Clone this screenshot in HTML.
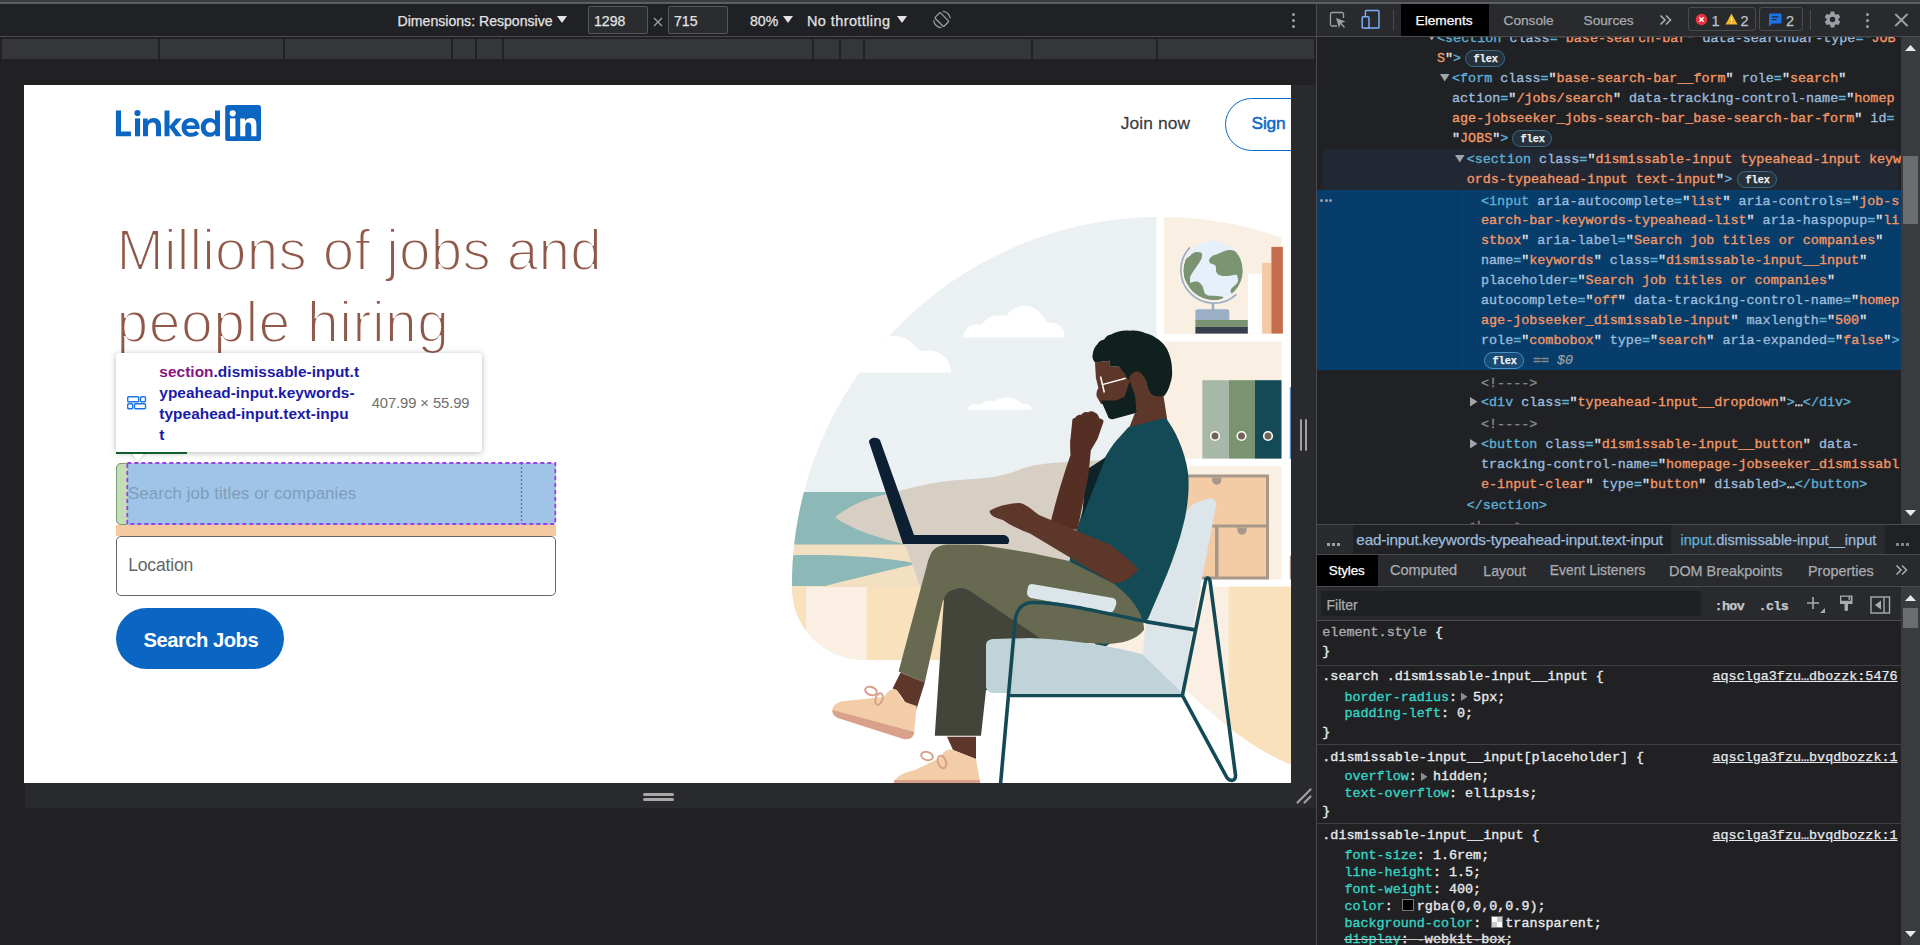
<!DOCTYPE html>
<html><head><meta charset="utf-8">
<style>
*{margin:0;padding:0;box-sizing:border-box}
html,body{width:1920px;height:945px;overflow:hidden;background:#212124;font-family:"Liberation Sans",sans-serif}
.a{position:absolute}
.tg{color:#5db0d7}.at{color:#9bbbdc}.av{color:#f29766}.cm{color:#8a8a8a}.tx{color:#e8eaed}
</style></head>
<body>
<style>.dt div{-webkit-text-stroke:0.25px}</style><div class="dt">
<div class="a" style="left:0px;top:0px;width:1920px;height:2px;background:#3b3c40;"></div>
<div class="a" style="left:0px;top:2px;width:1920px;height:2px;background:#5d5e62;"></div>
<div class="a" style="left:0px;top:4px;width:1316px;height:32px;background:#202124;"></div>
<div class="a" style="left:0px;top:36px;width:1316px;height:1px;background:#4a4b4f;"></div>
<div class="a" style="left:397.5px;top:14.4px;font:normal 14.1px/1 'Liberation Sans';color:#e3e3e3;white-space:pre;">Dimensions: Responsive</div>
<svg class="a" style="left:557px;top:16px" width="10" height="8"><path d="M0 0H10L5 7Z" fill="#e3e3e3"/></svg>
<div class="a" style="left:588px;top:6px;width:60px;height:28px;background:#2b2c2f;border:1px solid #55575b;border-radius:2px"></div>
<div class="a" style="left:594.0px;top:14.4px;font:normal 14.1px/1 'Liberation Sans';color:#e3e3e3;white-space:pre;">1298</div>
<svg class="a" style="left:653px;top:17px" width="10" height="10"><path d="M1 1L9 9M9 1L1 9" stroke="#9aa0a6" stroke-width="1.3"/></svg>
<div class="a" style="left:668px;top:6px;width:60px;height:28px;background:#2b2c2f;border:1px solid #55575b;border-radius:2px"></div>
<div class="a" style="left:674.0px;top:14.4px;font:normal 14.1px/1 'Liberation Sans';color:#e3e3e3;white-space:pre;">715</div>
<div class="a" style="left:750.0px;top:14.4px;font:normal 14.1px/1 'Liberation Sans';color:#e3e3e3;white-space:pre;">80%</div>
<svg class="a" style="left:783px;top:16px" width="10" height="8"><path d="M0 0H10L5 7Z" fill="#e3e3e3"/></svg>
<div class="a" style="left:807.0px;top:14.1px;font:normal 14.5px/1 'Liberation Sans';color:#e3e3e3;white-space:pre;letter-spacing:0.4px">No throttling</div>
<svg class="a" style="left:897px;top:16px" width="10" height="8"><path d="M0 0H10L5 7Z" fill="#e3e3e3"/></svg>
<svg class="a" style="left:932px;top:10px" width="20" height="20" viewBox="0 0 20 20"><g fill="none" stroke="#9aa0a6" stroke-width="1.3"><rect x="6" y="3.3" width="7.6" height="12.6" rx="1" transform="rotate(-45 9.8 9.6)"/><path d="M10.8 1.3A8.3 8.3 0 0 1 18.3 8.4"/><path d="M1.6 10.2A8.3 8.3 0 0 0 9.5 17.7"/></g></svg>
<div class="a" style="left:1291.5px;top:12.5px;width:3px;height:3px;background:#9aa0a6;border-radius:50%"></div>
<div class="a" style="left:1291.5px;top:18.5px;width:3px;height:3px;background:#9aa0a6;border-radius:50%"></div>
<div class="a" style="left:1291.5px;top:24.5px;width:3px;height:3px;background:#9aa0a6;border-radius:50%"></div>
<div class="a" style="left:2px;top:39px;width:1312px;height:20px;background:#35363a;"></div>
<div class="a" style="left:158px;top:39px;width:2px;height:20px;background:#202124;"></div>
<div class="a" style="left:283px;top:39px;width:2px;height:20px;background:#202124;"></div>
<div class="a" style="left:451px;top:39px;width:2px;height:20px;background:#202124;"></div>
<div class="a" style="left:475px;top:39px;width:2px;height:20px;background:#202124;"></div>
<div class="a" style="left:502px;top:39px;width:2px;height:20px;background:#202124;"></div>
<div class="a" style="left:812px;top:39px;width:2px;height:20px;background:#202124;"></div>
<div class="a" style="left:839px;top:39px;width:2px;height:20px;background:#202124;"></div>
<div class="a" style="left:863px;top:39px;width:2px;height:20px;background:#202124;"></div>
<div class="a" style="left:1031px;top:39px;width:2px;height:20px;background:#202124;"></div>
<div class="a" style="left:1156px;top:39px;width:2px;height:20px;background:#202124;"></div>
<div class="a" id="page" style="left:24px;top:85px;width:1267px;height:698px;background:#fff;overflow:hidden"></div>
<div class="a" style="left:25px;top:783px;width:1266px;height:25px;background:#292a2d;"></div>
<div class="a" style="left:1291px;top:85px;width:25px;height:723px;background:#292a2d;"></div>
<div class="a" style="left:643px;top:793px;width:31px;height:3px;background:#a8a8a8;border-radius:1.5px"></div>
<div class="a" style="left:643px;top:798px;width:31px;height:3px;background:#a8a8a8;border-radius:1.5px"></div>
<div class="a" style="left:1299.8px;top:419px;width:2.4px;height:32px;background:#a0a0a0;border-radius:1px"></div>
<div class="a" style="left:1304.6px;top:419px;width:2.4px;height:32px;background:#a0a0a0;border-radius:1px"></div>
<svg class="a" style="left:1295px;top:787px" width="18" height="18"><path d="M2.5 15.5L15.5 2.5M9.5 15.5L15.5 9.5" stroke="#a0a0a0" stroke-width="2.2" stroke-linecap="round"/></svg>
<div class="a" style="left:1316px;top:4px;width:1px;height:941px;background:#4a4b4f;"></div>
<div class="a" style="left:1317px;top:4px;width:603px;height:32px;background:#292a2d;"></div>
<div class="a" style="left:1317px;top:36px;width:603px;height:1px;background:#4a4b4f;"></div>
<svg class="a" style="left:1328px;top:10px" width="20" height="20" viewBox="0 0 20 20"><path d="M9 16H4a1.5 1.5 0 0 1-1.5-1.5V4A1.5 1.5 0 0 1 4 2.5h10A1.5 1.5 0 0 1 15.5 4v4" fill="none" stroke="#9aa0a6" stroke-width="1.3"/><path d="M8 8L17.5 11.5L13.5 13L17 17L16 18L12.5 14L11 18Z" fill="#9aa0a6"/></svg>
<svg class="a" style="left:1360px;top:9px" width="22" height="22" viewBox="0 0 22 22"><g fill="none" stroke="#7cacf8" stroke-width="1.5"><rect x="5.4" y="1.5" width="13.6" height="17.6" rx="0.8"/><rect x="2.2" y="7.7" width="6.8" height="11.4" rx="0.8" fill="#292a2d"/></g></svg>
<div class="a" style="left:1393px;top:10px;width:1px;height:20px;background:#4a4b4f;"></div>
<div class="a" style="left:1401px;top:4px;width:88px;height:32px;background:#000;"></div>
<div class="a" style="left:1415.5px;top:13.8px;font:normal 13.7px/1 'Liberation Sans';color:#ffffff;white-space:pre;">Elements</div>
<div class="a" style="left:1503.5px;top:13.8px;font:normal 13.7px/1 'Liberation Sans';color:#a8abb0;white-space:pre;">Console</div>
<div class="a" style="left:1583.5px;top:13.8px;font:normal 13.7px/1 'Liberation Sans';color:#a8abb0;white-space:pre;">Sources</div>
<svg class="a" style="left:1659px;top:14px" width="13" height="12" viewBox="0 0 13 12"><path d="M1.5 1.5L6 6L1.5 10.5M7 1.5L11.5 6L7 10.5" fill="none" stroke="#a8abb0" stroke-width="1.6"/></svg>
<div class="a" style="left:1688px;top:7px;width:68px;height:24px;background:transparent;border:1px solid #4a4b4f;border-radius:3px"></div>
<div class="a" style="left:1759px;top:7px;width:44px;height:24px;background:transparent;border:1px solid #4a4b4f;border-radius:3px"></div>
<svg class="a" style="left:1695px;top:13px" width="13" height="13" viewBox="0 0 13 13"><circle cx="6.5" cy="6.5" r="5.8" fill="#e9333f"/><path d="M4.3 4.3L8.7 8.7M8.7 4.3L4.3 8.7" stroke="#fff" stroke-width="1.4"/></svg>
<div class="a" style="left:1711.5px;top:13.9px;font:normal 14.5px/1 'Liberation Sans';color:#bdc1c6;white-space:pre;">1</div>
<svg class="a" style="left:1725px;top:13px" width="13" height="12" viewBox="0 0 13 12"><path d="M6.5 0.5L12.5 11.5H0.5Z" fill="#f2b824"/><path d="M6.5 4V8M6.5 9.3V10.3" stroke="#fff" stroke-width="1.3"/></svg>
<div class="a" style="left:1740.5px;top:13.9px;font:normal 14.5px/1 'Liberation Sans';color:#bdc1c6;white-space:pre;">2</div>
<svg class="a" style="left:1768px;top:13px" width="14" height="14" viewBox="0 0 14 14"><path d="M2 0.5H12A1.5 1.5 0 0 1 13.5 2V9A1.5 1.5 0 0 1 12 10.5H4.5L1 13.5V2A1.5 1.5 0 0 1 2 0.5Z" fill="#1a73e8"/><path d="M3.8 3.8H10.5M3.8 6.6H8.5" stroke="#292a2d" stroke-width="1.2"/></svg>
<div class="a" style="left:1786.0px;top:13.9px;font:normal 14.5px/1 'Liberation Sans';color:#bdc1c6;white-space:pre;">2</div>
<div class="a" style="left:1810px;top:10px;width:1px;height:20px;background:#4a4b4f;"></div>
<svg class="a" style="left:1823px;top:10px" width="19" height="19" viewBox="0 0 24 24"><path fill="#9aa0a6" d="M19.4 13c.04-.32.06-.66.06-1s-.02-.68-.06-1l2.1-1.65a.5.5 0 0 0 .12-.64l-2-3.46a.5.5 0 0 0-.61-.22l-2.49 1a7.3 7.3 0 0 0-1.69-.98l-.38-2.65A.49.49 0 0 0 14 2h-4a.49.49 0 0 0-.49.42l-.38 2.65c-.61.25-1.17.58-1.69.98l-2.49-1a.5.5 0 0 0-.61.22l-2 3.46a.49.49 0 0 0 .12.64L4.57 11c-.04.32-.07.66-.07 1s.03.68.07 1l-2.11 1.65a.5.5 0 0 0-.12.64l2 3.46c.12.22.39.3.61.22l2.49-1c.52.4 1.08.73 1.69.98l.38 2.65c.03.24.24.42.49.42h4c.25 0 .46-.18.49-.42l.38-2.65c.61-.25 1.17-.58 1.69-.98l2.49 1c.23.09.49 0 .61-.22l2-3.46a.5.5 0 0 0-.12-.64L19.4 13zM12 15.5A3.5 3.5 0 1 1 12 8.5a3.5 3.5 0 0 1 0 7z"/></svg>
<div class="a" style="left:1866px;top:12.5px;width:3px;height:3px;background:#9aa0a6;border-radius:50%"></div>
<div class="a" style="left:1866px;top:18.5px;width:3px;height:3px;background:#9aa0a6;border-radius:50%"></div>
<div class="a" style="left:1866px;top:24.5px;width:3px;height:3px;background:#9aa0a6;border-radius:50%"></div>
<svg class="a" style="left:1894px;top:13px" width="14" height="14"><path d="M1.8 1.5L13 12.5M13 1.5L1.8 12.5" stroke="#9aa0a6" stroke-width="1.9" stroke-linecap="round"/></svg>
<div class="a" style="left:0;top:0;width:1920px;height:945px;clip-path:inset(37px 0 421px 1317px)">
<div class="a" style="left:1317px;top:37px;width:603px;height:487px;background:#202124;"></div>
<div class="a" style="left:1322px;top:149px;width:575.5px;height:41px;background:#222833;border-radius:5px"></div>
<div class="a" style="left:1317px;top:190px;width:584px;height:180px;background:#073d6a;"></div>
<div class="a" style="left:1457px;top:190px;width:1px;height:180px;background:#08355c;"></div>
<style>.q{color:#e0e6ee}</style>
<svg class="a" style="left:1427px;top:33px" width="10" height="8"><path d="M0 0H9.5L4.75 7.5Z" fill="#a0a4ab"/></svg>
<div class="a" style="left:1437.0px;top:31.7px;font:13.42px/1 'Liberation Mono';white-space:pre;-webkit-text-stroke:0.35px"><span class="tg">&lt;section</span><span class="tx"> </span><span class="at">class</span><span class="tg">=</span><span class="q">"</span><span class="av">base-search-bar</span><span class="q">"</span><span class="tx"> </span><span class="at">data-searchbar-type</span><span class="tg">=</span><span class="q">"</span><span class="av">JOB</span></div>
<div class="a" style="left:1437.0px;top:51.7px;font:13.42px/1 'Liberation Mono';white-space:pre;-webkit-text-stroke:0.35px"><span class="av">S</span><span class="q">"</span><span class="tg">&gt;</span></div>
<div class="a" style="left:1465px;top:49.9px;width:40px;height:17px;border:1px solid #3d6a85;background:#25323d;border-radius:9px"></div>
<div class="a" style="left:1473.5px;top:55.2px;font:bold 10.2px/1 'Liberation Mono';color:#f0f0f0;white-space:pre;">flex</div>
<svg class="a" style="left:1440px;top:74px" width="10" height="8"><path d="M0 0H9.5L4.75 7.5Z" fill="#a0a4ab"/></svg>
<div class="a" style="left:1452.0px;top:72.4px;font:13.42px/1 'Liberation Mono';white-space:pre;-webkit-text-stroke:0.35px"><span class="tg">&lt;form</span><span class="tx"> </span><span class="at">class</span><span class="tg">=</span><span class="q">"</span><span class="av">base-search-bar__form</span><span class="q">"</span><span class="tx"> </span><span class="at">role</span><span class="tg">=</span><span class="q">"</span><span class="av">search</span><span class="q">"</span></div>
<div class="a" style="left:1452.0px;top:92.1px;font:13.42px/1 'Liberation Mono';white-space:pre;-webkit-text-stroke:0.35px"><span class="at">action</span><span class="tg">=</span><span class="q">"</span><span class="av">/jobs/search</span><span class="q">"</span><span class="tx"> </span><span class="at">data-tracking-control-name</span><span class="tg">=</span><span class="q">"</span><span class="av">homep</span></div>
<div class="a" style="left:1452.0px;top:111.8px;font:13.42px/1 'Liberation Mono';white-space:pre;-webkit-text-stroke:0.35px"><span class="av">age-jobseeker_jobs-search-bar_base-search-bar-form</span><span class="q">"</span><span class="at"> id</span><span class="tg">=</span></div>
<div class="a" style="left:1452.0px;top:131.8px;font:13.42px/1 'Liberation Mono';white-space:pre;-webkit-text-stroke:0.35px"><span class="q">"</span><span class="av">JOBS</span><span class="q">"</span><span class="tg">&gt;</span></div>
<div class="a" style="left:1512px;top:130.0px;width:40px;height:17px;border:1px solid #3d6a85;background:#25323d;border-radius:9px"></div>
<div class="a" style="left:1520.5px;top:135.3px;font:bold 10.2px/1 'Liberation Mono';color:#f0f0f0;white-space:pre;">flex</div>
<svg class="a" style="left:1455px;top:154.5px" width="10" height="8"><path d="M0 0H9.5L4.75 7.5Z" fill="#a0a4ab"/></svg>
<div class="a" style="left:1466.7px;top:153.3px;font:13.42px/1 'Liberation Mono';white-space:pre;-webkit-text-stroke:0.35px"><span class="tg">&lt;section</span><span class="tx"> </span><span class="at">class</span><span class="tg">=</span><span class="q">"</span><span class="av">dismissable-input typeahead-input keyw</span></div>
<div class="a" style="left:1466.7px;top:173.1px;font:13.42px/1 'Liberation Mono';white-space:pre;-webkit-text-stroke:0.35px"><span class="av">ords-typeahead-input text-input</span><span class="q">"</span><span class="tg">&gt;</span></div>
<div class="a" style="left:1737px;top:171.0px;width:40px;height:17px;border:1px solid #3d6a85;background:#25323d;border-radius:9px"></div>
<div class="a" style="left:1745.5px;top:176.3px;font:bold 10.2px/1 'Liberation Mono';color:#f0f0f0;white-space:pre;">flex</div>
<div class="a" style="left:1320.0px;top:199px;width:3px;height:3px;background:#9aa0a6;border-radius:50%"></div>
<div class="a" style="left:1324.5px;top:199px;width:3px;height:3px;background:#9aa0a6;border-radius:50%"></div>
<div class="a" style="left:1329.0px;top:199px;width:3px;height:3px;background:#9aa0a6;border-radius:50%"></div>
<div class="a" style="left:1481.0px;top:194.5px;font:13.42px/1 'Liberation Mono';white-space:pre;-webkit-text-stroke:0.35px"><span class="tg">&lt;input</span><span class="tx"> </span><span class="at">aria-autocomplete</span><span class="tg">=</span><span class="q">"</span><span class="av">list</span><span class="q">"</span><span class="tx"> </span><span class="at">aria-controls</span><span class="tg">=</span><span class="q">"</span><span class="av">job-s</span></div>
<div class="a" style="left:1481.0px;top:214.2px;font:13.42px/1 'Liberation Mono';white-space:pre;-webkit-text-stroke:0.35px"><span class="av">earch-bar-keywords-typeahead-list</span><span class="q">"</span><span class="tx"> </span><span class="at">aria-haspopup</span><span class="tg">=</span><span class="q">"</span><span class="av">li</span></div>
<div class="a" style="left:1481.0px;top:233.9px;font:13.42px/1 'Liberation Mono';white-space:pre;-webkit-text-stroke:0.35px"><span class="av">stbox</span><span class="q">"</span><span class="tx"> </span><span class="at">aria-label</span><span class="tg">=</span><span class="q">"</span><span class="av">Search job titles or companies</span><span class="q">"</span></div>
<div class="a" style="left:1481.0px;top:253.8px;font:13.42px/1 'Liberation Mono';white-space:pre;-webkit-text-stroke:0.35px"><span class="at">name</span><span class="tg">=</span><span class="q">"</span><span class="av">keywords</span><span class="q">"</span><span class="tx"> </span><span class="at">class</span><span class="tg">=</span><span class="q">"</span><span class="av">dismissable-input__input</span><span class="q">"</span></div>
<div class="a" style="left:1481.0px;top:273.8px;font:13.42px/1 'Liberation Mono';white-space:pre;-webkit-text-stroke:0.35px"><span class="at">placeholder</span><span class="tg">=</span><span class="q">"</span><span class="av">Search job titles or companies</span><span class="q">"</span></div>
<div class="a" style="left:1481.0px;top:293.6px;font:13.42px/1 'Liberation Mono';white-space:pre;-webkit-text-stroke:0.35px"><span class="at">autocomplete</span><span class="tg">=</span><span class="q">"</span><span class="av">off</span><span class="q">"</span><span class="tx"> </span><span class="at">data-tracking-control-name</span><span class="tg">=</span><span class="q">"</span><span class="av">homep</span></div>
<div class="a" style="left:1481.0px;top:313.6px;font:13.42px/1 'Liberation Mono';white-space:pre;-webkit-text-stroke:0.35px"><span class="av">age-jobseeker_dismissable-input</span><span class="q">"</span><span class="tx"> </span><span class="at">maxlength</span><span class="tg">=</span><span class="q">"</span><span class="av">500</span><span class="q">"</span></div>
<div class="a" style="left:1481.0px;top:333.6px;font:13.42px/1 'Liberation Mono';white-space:pre;-webkit-text-stroke:0.35px"><span class="at">role</span><span class="tg">=</span><span class="q">"</span><span class="av">combobox</span><span class="q">"</span><span class="tx"> </span><span class="at">type</span><span class="tg">=</span><span class="q">"</span><span class="av">search</span><span class="q">"</span><span class="tx"> </span><span class="at">aria-expanded</span><span class="tg">=</span><span class="q">"</span><span class="av">false</span><span class="q">"</span><span class="tg">&gt;</span></div>
<div class="a" style="left:1484px;top:351.8px;width:40px;height:17px;border:1px solid #4a90c2;background:#174a75;border-radius:9px"></div>
<div class="a" style="left:1492.5px;top:357.1px;font:bold 10.2px/1 'Liberation Mono';color:#f0f0f0;white-space:pre;">flex</div>
<div class="a" style="left:1533.0px;top:353.8px;font:13.42px/1 'Liberation Mono';white-space:pre;-webkit-text-stroke:0.35px"><span class="cm">== </span></div>
<div class="a" style="left:1557.0px;top:354.3px;font:normal 13.4px/1 'Liberation Mono';color:#9aa0a6;white-space:pre;font-style:italic">$0</div>
<div class="a" style="left:1481.0px;top:376.6px;font:13.42px/1 'Liberation Mono';white-space:pre;-webkit-text-stroke:0.35px"><span class="cm">&lt;!----&gt;</span></div>
<svg class="a" style="left:1470px;top:397px" width="8" height="10"><path d="M0 0V9.5L7.5 4.75Z" fill="#a0a4ab"/></svg>
<div class="a" style="left:1481.0px;top:396.2px;font:13.42px/1 'Liberation Mono';white-space:pre;-webkit-text-stroke:0.35px"><span class="tg">&lt;div</span><span class="tx"> </span><span class="at">class</span><span class="tg">=</span><span class="q">"</span><span class="av">typeahead-input__dropdown</span><span class="q">"</span><span class="tg">&gt;</span><span class="tx">…</span><span class="tg">&lt;/div&gt;</span></div>
<div class="a" style="left:1481.0px;top:418.4px;font:13.42px/1 'Liberation Mono';white-space:pre;-webkit-text-stroke:0.35px"><span class="cm">&lt;!----&gt;</span></div>
<svg class="a" style="left:1470px;top:438.5px" width="8" height="10"><path d="M0 0V9.5L7.5 4.75Z" fill="#a0a4ab"/></svg>
<div class="a" style="left:1481.0px;top:438.0px;font:13.42px/1 'Liberation Mono';white-space:pre;-webkit-text-stroke:0.35px"><span class="tg">&lt;button</span><span class="tx"> </span><span class="at">class</span><span class="tg">=</span><span class="q">"</span><span class="av">dismissable-input__button</span><span class="q">"</span><span class="tx"> </span><span class="at">data-</span></div>
<div class="a" style="left:1481.0px;top:458.4px;font:13.42px/1 'Liberation Mono';white-space:pre;-webkit-text-stroke:0.35px"><span class="at">tracking-control-name</span><span class="tg">=</span><span class="q">"</span><span class="av">homepage-jobseeker_dismissabl</span></div>
<div class="a" style="left:1481.0px;top:478.2px;font:13.42px/1 'Liberation Mono';white-space:pre;-webkit-text-stroke:0.35px"><span class="av">e-input-clear</span><span class="q">"</span><span class="tx"> </span><span class="at">type</span><span class="tg">=</span><span class="q">"</span><span class="av">button</span><span class="q">"</span><span class="tx"> </span><span class="at">disabled</span><span class="tg">&gt;</span><span class="tx">…</span><span class="tg">&lt;/button&gt;</span></div>
<div class="a" style="left:1466.7px;top:499.3px;font:13.42px/1 'Liberation Mono';white-space:pre;-webkit-text-stroke:0.35px"><span class="tg">&lt;/section&gt;</span></div>
<div class="a" style="left:1466.7px;top:520.3px;font:13.42px/1 'Liberation Mono';white-space:pre;-webkit-text-stroke:0.35px"><span class="cm">&lt;!----&gt;</span></div>
<div class="a" style="left:1901px;top:37px;width:19px;height:487px;background:#3a3b3e;"></div>
<svg class="a" style="left:1904px;top:44px" width="13" height="8"><path d="M1 7H12L6.5 1Z" fill="#e8eaed"/></svg>
<svg class="a" style="left:1904px;top:509px" width="13" height="8"><path d="M1 1H12L6.5 7Z" fill="#e8eaed"/></svg>
<div class="a" style="left:1903px;top:156px;width:15px;height:68px;background:#6b6c6f;"></div>
</div>
<div class="a" style="left:1317px;top:524px;width:603px;height:1px;background:#4a4b4f;"></div>
<div class="a" style="left:1317px;top:525px;width:603px;height:29px;background:#292a2d;"></div>
<div class="a" style="left:1353px;top:525px;width:318px;height:29px;background:#202124;"></div>
<div class="a" style="left:1885px;top:525px;width:35px;height:29px;background:#202124;"></div>
<div class="a" style="left:1317px;top:525px;width:36px;height:29px;background:#2a2b2e;"></div>
<div class="a" style="left:0;top:0;width:1920px;height:945px;clip-path:inset(525px 249px 391px 1353px)">
<div class="a" style="left:1356.3px;top:532.0px;font:normal 15.35px/1 'Liberation Sans';color:#9bbbdc;white-space:pre;letter-spacing:-0.2px">ead-input.keywords-typeahead-input.text-input</div>
</div>
<div class="a" style="left:1327px;top:543px;width:3px;height:2.5px;background:#9aa0a6;"></div>
<div class="a" style="left:1332px;top:543px;width:3px;height:2.5px;background:#9aa0a6;"></div>
<div class="a" style="left:1337px;top:543px;width:3px;height:2.5px;background:#9aa0a6;"></div>
<div class="a" style="left:1680.5px;top:532.6px;font:normal 14.57px/1 'Liberation Sans';color:#9bbbdc;white-space:pre;"><span style="color:#5db0d7">input</span>.dismissable-input__input</div>
<div class="a" style="left:1896px;top:543px;width:3px;height:2.5px;background:#80868b;"></div>
<div class="a" style="left:1901px;top:543px;width:3px;height:2.5px;background:#80868b;"></div>
<div class="a" style="left:1906px;top:543px;width:3px;height:2.5px;background:#80868b;"></div>
<div class="a" style="left:1317px;top:554px;width:603px;height:1px;background:#4a4b4f;"></div>
<div class="a" style="left:1317px;top:555px;width:603px;height:32px;background:#292a2d;"></div>
<div class="a" style="left:1317px;top:555px;width:61px;height:31px;background:#000;"></div>
<div class="a" style="left:1328.8px;top:564.4px;font:normal 13.4px/1 'Liberation Sans';color:#ffffff;white-space:pre;letter-spacing:-0.1px">Styles</div>
<div class="a" style="left:1389.9px;top:563.4px;font:normal 14.6px/1 'Liberation Sans';color:#a8abb0;white-space:pre;">Computed</div>
<div class="a" style="left:1483.3px;top:563.7px;font:normal 14.2px/1 'Liberation Sans';color:#a8abb0;white-space:pre;">Layout</div>
<div class="a" style="left:1549.8px;top:564.0px;font:normal 13.9px/1 'Liberation Sans';color:#a8abb0;white-space:pre;">Event Listeners</div>
<div class="a" style="left:1669.0px;top:563.6px;font:normal 14.4px/1 'Liberation Sans';color:#a8abb0;white-space:pre;">DOM Breakpoints</div>
<div class="a" style="left:1808.0px;top:563.6px;font:normal 14.4px/1 'Liberation Sans';color:#a8abb0;white-space:pre;">Properties</div>
<svg class="a" style="left:1895px;top:564px" width="13" height="12" viewBox="0 0 13 12"><path d="M1.5 1.5L6 6L1.5 10.5M7 1.5L11.5 6L7 10.5" fill="none" stroke="#a8abb0" stroke-width="1.6"/></svg>
<div class="a" style="left:1317px;top:586px;width:603px;height:1px;background:#4a4b4f;"></div>
<div class="a" style="left:1317px;top:587px;width:603px;height:33px;background:#292a2d;"></div>
<div class="a" style="left:1321px;top:591px;width:380px;height:25px;background:#1f2023;"></div>
<div class="a" style="left:1326.5px;top:597.9px;font:normal 14.0px/1 'Liberation Sans';color:#a8abb0;white-space:pre;">Filter</div>
<div class="a" style="left:1714.5px;top:599.8px;font:bold 13.4px/1 'Liberation Mono';color:#c5c8cc;white-space:pre;letter-spacing:-0.6px">:hov</div>
<div class="a" style="left:1758.5px;top:599.8px;font:bold 13.4px/1 'Liberation Mono';color:#c5c8cc;white-space:pre;letter-spacing:-0.6px">.cls</div>
<svg class="a" style="left:1805px;top:595px" width="22" height="20"><path d="M8 2V14M2 8H14" stroke="#a8abb0" stroke-width="1.6"/><path d="M15 18H20V13Z" fill="#a8abb0"/></svg>
<svg class="a" style="left:1838px;top:594px" width="17" height="20" viewBox="0 0 17 20"><path d="M2 1.5H14.5V10H10V15.5A1.5 1.5 0 0 1 8.5 17H8A1.5 1.5 0 0 1 6.5 15.5V10H2Z" fill="#a8abb0"/><rect x="3.3" y="2.8" width="9.5" height="4" fill="#292a2d"/><rect x="10.5" y="2.8" width="1.5" height="3" fill="#a8abb0"/></svg>
<svg class="a" style="left:1870px;top:596px" width="21" height="18"><rect x="1" y="1" width="18.5" height="16" fill="none" stroke="#a8abb0" stroke-width="1.4"/><path d="M14 1V17" stroke="#a8abb0" stroke-width="1.4"/><path d="M11 4.5V13.5L5 9Z" fill="#a8abb0"/></svg>
<div class="a" style="left:1317px;top:620px;width:584px;height:1px;background:#4a4b4f;"></div>
<div class="a" style="left:1901px;top:587px;width:19px;height:358px;background:#3a3b3e;"></div>
<svg class="a" style="left:1904px;top:594px" width="13" height="8"><path d="M1 7H12L6.5 1Z" fill="#e8eaed"/></svg>
<svg class="a" style="left:1904px;top:930px" width="13" height="8"><path d="M1 1H12L6.5 7Z" fill="#e8eaed"/></svg>
<div class="a" style="left:1903px;top:608px;width:15px;height:20px;background:#6b6c6f;"></div>
<div class="a" style="left:1322.3px;top:625.8px;font:13.42px/1 'Liberation Mono';white-space:pre;-webkit-text-stroke:0.35px"><span style="color:#a8abb0">element.style</span><span style="color:#e8eaed"> {</span></div>
<div class="a" style="left:1322.3px;top:645.3px;font:13.42px/1 'Liberation Mono';white-space:pre;-webkit-text-stroke:0.35px"><span style="color:#e8eaed">}</span></div>
<div class="a" style="left:1317px;top:664.5px;width:584px;height:1px;background:#3f4044;"></div>
<div class="a" style="left:1322.3px;top:670.4px;font:13.42px/1 'Liberation Mono';white-space:pre;-webkit-text-stroke:0.35px"><span style="color:#e8eaed">.search .dismissable-input__input {</span></div>
<div class="a" style="left:1712.5px;top:670.4px;font:13.42px/1 'Liberation Mono';white-space:pre;color:#e8eaed;text-decoration:underline;letter-spacing:0">aqsclga3fzu…dbozzk:5476</div>
<div class="a" style="left:1344.4px;top:690.5px;font:13.42px/1 'Liberation Mono';white-space:pre;-webkit-text-stroke:0.35px"><span style="color:#35d5c5">border-radius</span><span style="color:#e8eaed">:  5px;</span></div>
<svg class="a" style="left:1461px;top:692px" width="8" height="10"><path d="M0 0.5V9L6.5 4.75Z" fill="#8a8d91"/></svg>
<div class="a" style="left:1344.4px;top:707.1px;font:13.42px/1 'Liberation Mono';white-space:pre;-webkit-text-stroke:0.35px"><span style="color:#35d5c5">padding-left</span><span style="color:#e8eaed">: 0;</span></div>
<div class="a" style="left:1322.3px;top:725.8px;font:13.42px/1 'Liberation Mono';white-space:pre;-webkit-text-stroke:0.35px"><span style="color:#e8eaed">}</span></div>
<div class="a" style="left:1317px;top:744.3px;width:584px;height:1px;background:#3f4044;"></div>
<div class="a" style="left:1322.3px;top:750.6px;font:13.42px/1 'Liberation Mono';white-space:pre;-webkit-text-stroke:0.35px"><span style="color:#e8eaed">.dismissable-input__input[placeholder] {</span></div>
<div class="a" style="left:1712.5px;top:750.6px;font:13.42px/1 'Liberation Mono';white-space:pre;color:#e8eaed;text-decoration:underline;letter-spacing:0">aqsclga3fzu…bvqdbozzk:1</div>
<div class="a" style="left:1344.4px;top:770.0px;font:13.42px/1 'Liberation Mono';white-space:pre;-webkit-text-stroke:0.35px"><span style="color:#35d5c5">overflow</span><span style="color:#e8eaed">:  hidden;</span></div>
<svg class="a" style="left:1421px;top:771.5px" width="8" height="10"><path d="M0 0.5V9L6.5 4.75Z" fill="#8a8d91"/></svg>
<div class="a" style="left:1344.4px;top:787.0px;font:13.42px/1 'Liberation Mono';white-space:pre;-webkit-text-stroke:0.35px"><span style="color:#35d5c5">text-overflow</span><span style="color:#e8eaed">: ellipsis;</span></div>
<div class="a" style="left:1322.3px;top:804.6px;font:13.42px/1 'Liberation Mono';white-space:pre;-webkit-text-stroke:0.35px"><span style="color:#e8eaed">}</span></div>
<div class="a" style="left:1317px;top:823px;width:584px;height:1px;background:#3f4044;"></div>
<div class="a" style="left:1322.3px;top:829.4px;font:13.42px/1 'Liberation Mono';white-space:pre;-webkit-text-stroke:0.35px"><span style="color:#e8eaed">.dismissable-input__input {</span></div>
<div class="a" style="left:1712.5px;top:829.4px;font:13.42px/1 'Liberation Mono';white-space:pre;color:#e8eaed;text-decoration:underline;letter-spacing:0">aqsclga3fzu…bvqdbozzk:1</div>
<div class="a" style="left:1344.4px;top:849.1px;font:13.42px/1 'Liberation Mono';white-space:pre;-webkit-text-stroke:0.35px"><span style="color:#35d5c5">font-size</span><span style="color:#e8eaed">: 1.6rem;</span></div>
<div class="a" style="left:1344.4px;top:865.9px;font:13.42px/1 'Liberation Mono';white-space:pre;-webkit-text-stroke:0.35px"><span style="color:#35d5c5">line-height</span><span style="color:#e8eaed">: 1.5;</span></div>
<div class="a" style="left:1344.4px;top:882.8px;font:13.42px/1 'Liberation Mono';white-space:pre;-webkit-text-stroke:0.35px"><span style="color:#35d5c5">font-weight</span><span style="color:#e8eaed">: 400;</span></div>
<div class="a" style="left:1344.4px;top:899.8px;font:13.42px/1 'Liberation Mono';white-space:pre;-webkit-text-stroke:0.35px"><span style="color:#35d5c5">color</span><span style="color:#e8eaed">:   rgba(0,0,0,0.9);</span></div>
<div class="a" style="left:1402px;top:899px;width:12px;height:12px;background:#000;border:1px solid #7a7a7a"></div>
<div class="a" style="left:1344.4px;top:916.8px;font:13.42px/1 'Liberation Mono';white-space:pre;-webkit-text-stroke:0.35px"><span style="color:#35d5c5">background-color</span><span style="color:#e8eaed">:   transparent;</span></div>
<div class="a" style="left:1491px;top:916px;width:12px;height:12px;border:1px solid #7a7a7a;background:conic-gradient(#ccc 0 25%,#fff 0 50%,#ccc 0 75%,#fff 0);background-size:10px 10px;background-position:0 0"></div>
<div class="a" style="left:1344.4px;top:933.3px;font:13.42px/1 'Liberation Mono';white-space:pre;-webkit-text-stroke:0.35px"><span style="color:#35d5c5">display</span><span style="color:#e8eaed">: -webkit-box;</span></div>
<div class="a" style="left:1344px;top:939px;width:165px;height:1px;background:#c8c8c8;"></div>
</div>
<svg class="a" style="left:0;top:0" width="1920" height="945">
<g fill="#0a66c2">
<path d="M115.9 110.5H121V131.6H131V136.3H115.9Z"/>
<circle cx="137.5" cy="113" r="3.1"/>
<rect x="135" y="118.4" width="5.1" height="17.9"/>
<path d="M143 118.4H147.7V121C149 119 151 118 153.7 118C158.5 118 161 121 161 126V136.3H156V127C156 124 155 122.6 152.6 122.6C149.8 122.6 148 124.5 148 127.5V136.3H143Z"/>
<path d="M164.5 110.5H169.5V126.2L176 118.4H182L174.6 126.8L182 136.3H175.9L169.5 127.6V136.3H164.5Z"/>
<path d="M190.8 118C196.5 118 199.6 122 199.6 127.6V128.9H186.4C186.8 131.4 188.6 132.8 191.3 132.8C193.3 132.8 194.8 132 195.9 130.7L199 133.5C197.3 135.6 194.6 136.8 191.2 136.8C185.3 136.8 181.6 133 181.6 127.4C181.6 121.8 185.4 118 190.8 118ZM190.8 122C188.5 122 186.9 123.4 186.5 125.6H195C194.7 123.4 193.1 122 190.8 122Z"/>
<path d="M215 110.5H220V136.3H215.4V134.2C214 135.9 212 136.8 209.5 136.8C204.4 136.8 200.8 132.9 200.8 127.4C200.8 121.9 204.4 118 209.5 118C211.8 118 213.7 118.8 215 120.3ZM210.5 122.3C207.6 122.3 205.7 124.4 205.7 127.4C205.7 130.4 207.6 132.5 210.5 132.5C213.4 132.5 215.3 130.4 215.3 127.4C215.3 124.4 213.4 122.3 210.5 122.3Z"/>
<rect x="225.2" y="105" width="35.8" height="36.1" rx="2.6"/>
</g>
<g fill="#fff">
<circle cx="232.7" cy="113.3" r="3.1"/>
<rect x="230" y="118.4" width="5.4" height="17.9"/>
<path d="M240.2 118.4H245V121C246.3 119 248.5 118 251.2 118C256 118 256.4 121.6 256.4 126V136.3H251.3V127.3C251.3 124.5 250.5 122.6 248.2 122.6C245.7 122.6 245.3 124.6 245.3 127.5V136.3H240.2Z"/>
</g>
</svg>
<div class="a" style="left:1120.8px;top:115.2px;font:normal 17.4px/1 'Liberation Sans';color:rgba(0,0,0,0.75);white-space:pre;letter-spacing:0.1px;-webkit-text-stroke:0.35px rgba(0,0,0,0.6)">Join now</div>
<div class="a" style="left:0;top:0;width:1920px;height:945px;clip-path:inset(85px 629px 162px 24px)">
<div class="a" style="left:1224.5px;top:97.5px;width:120px;height:53px;background:transparent;border:1.5px solid #0a66c2;border-radius:27px"></div>
<div class="a" style="left:1251.5px;top:115.2px;font:normal 17.4px/1 'Liberation Sans';color:#0a66c2;white-space:pre;letter-spacing:-0.2px;-webkit-text-stroke:0.45px #0a66c2">Sign</div>
</div>
<div class="a" style="left:116.6px;top:222.5px;font:normal 56.6px/1 'Liberation Sans';color:#8f5849;white-space:pre;-webkit-text-stroke:2px #fff;letter-spacing:0.2px">Millions of jobs and</div>
<div class="a" style="left:116.6px;top:294.4px;font:normal 57.0px/1 'Liberation Sans';color:#8f5849;white-space:pre;-webkit-text-stroke:2px #fff;letter-spacing:0.5px">people hiring</div>
<svg class="a" style="left:0;top:0;clip-path:inset(85px 629px 162px 24px)" width="1920" height="945" viewBox="0 0 1920 945">
<defs>
<clipPath id="scene">
<path d="M792 585A368 368 0 0 1 1300 244.7V768C1250 750 1220 720 1187 691C1150 672 1100 660 1000 660H864A72 72 0 0 1 792 588Z"/>
</clipPath>
</defs>
<g clip-path="url(#scene)">
<rect x="780" y="200" width="520" height="600" fill="#ebf0f3"/>
<!-- shelf -->
<rect x="1156.5" y="200" width="140" height="400" fill="#fff"/>
<rect x="1164" y="200" width="117.5" height="134" fill="#f9efe2"/>
<rect x="1164" y="341.6" width="117.5" height="117" fill="#f9efe2"/>
<rect x="1164" y="466" width="117.5" height="113.4" fill="#f9efe2"/>
<rect x="1289.8" y="387" width="2" height="72" fill="#5b8fc7"/><rect x="1289.8" y="555.5" width="2" height="24" fill="#a8988a"/>
<!-- floor -->
<rect x="780" y="586.7" width="520" height="220" fill="#faefe2"/>
<rect x="1228.8" y="586.7" width="70" height="220" fill="#f9e1bb"/>
<rect x="780" y="587" width="26" height="80" fill="#f9e1bb"/>
<rect x="866.7" y="587" width="150" height="80" fill="#f9e1bb"/>
<!-- beach / sea -->
<rect x="780" y="492" width="376" height="95" fill="#f3dfc1"/>
<rect x="780" y="492" width="376" height="52.5" fill="#8cb8b8"/>
<path d="M780 555.5C830 554 880 556 917.5 563.8C880 572 850 580 825 586H780Z" fill="#8cb8b8"/>
<!-- sand blob -->
<path d="M835 517C850 505 870 497 890 493.6C915 486 940 481 960 480C990 478 1003 477 1022.5 468.5C1040 463 1063 461.7 1105 460.3L1160 462V600H925L905 544.5C880 538 860 532 848 525C842 522 838 520 835 517Z" fill="#d7cfc4"/>
<!-- clouds -->
<g fill="#fff">
<path d="M850 372.5V340L890 335.5C905 335.5 912 342 917.6 349C920 351 923 351.5 927 350.8C942 350 951 360 951 372.5Z"/>
<path d="M963.1 337.5C963.1 330 969 324.4 975.5 324.4L981.7 324.4C985 320 990 315.4 996.8 315.4L1006.4 315.4C1011 310 1017 305.8 1024.3 305.8C1034 305.8 1041 312 1046.3 321C1048 322.5 1050 323 1053.2 323C1060 324 1064.9 330 1064.9 337.5Z"/>
<path d="M967.2 409.7C968 406 972 404.2 976.2 404.2L980.3 404.2C983 402 986 400.7 988.6 400.7L995.4 400.7C999 398.5 1003 397.3 1007.1 397.3C1013 397.3 1018 400 1021.6 403.5L1027.1 404.2C1030 405 1031.9 407 1031.9 409.7Z"/>
</g>
<!-- globe -->
<clipPath id="gl"><circle cx="1213.1" cy="270.7" r="29.6"/></clipPath>
<circle cx="1213.1" cy="270.7" r="29.6" fill="#e6f0fa"/>
<g clip-path="url(#gl)" fill="#7a9370">
<path d="M1183.6 264.3C1185 260 1186 258 1188.6 257.1C1192 254 1194 252 1197.1 252.1C1200 252 1203 253 1202.1 255C1202 258 1201 260 1200 261.4L1194.3 270C1192 273 1190 276 1190 278.6C1190 281 1190 283 1190.7 282.9C1193 282 1196 281 1198.6 282.1C1201 284 1202 285 1202.9 287.1C1204 290 1204 293 1205.7 294.3C1208 296 1211 296 1214.3 295.7C1218 296 1221 296 1223.6 297.1C1222 300 1218 301 1214.3 300C1210 300 1206 299 1202.9 297.9C1198 296 1194 293 1191.4 290C1188 286 1186 282 1184.3 278.6C1183 275 1182.5 270 1183.6 264.3Z"/>
<path d="M1209.3 259.3C1211 256 1214 255 1217.1 254.3C1222 252 1226 250 1230 250C1233 250 1236 251 1237.1 252.9C1240 256 1241.5 259 1242 262C1243 266 1243 270 1243 275C1243 278 1242 281 1241 283C1239 287 1237 290 1236 291C1234 293 1232 294 1231 293C1230 291 1231 289 1232 288C1235 285 1238 283 1238 281C1238 278 1237.5 276 1237 275C1234 274 1231 276 1228 276C1224 276 1221 276 1219 275C1217 274 1216 272 1216 270C1216 268 1216 266 1215 265C1213 264 1211 264 1210 263C1209 262 1209 260.5 1209.3 259.3Z"/>
</g>
<path d="M1190 247.4A33 33 0 0 0 1236.4 294.3" fill="none" stroke="#9aaec6" stroke-width="1.7"/>
<rect x="1211.7" y="303.5" width="2.6" height="6.5" fill="#9aaec6"/>
<path d="M1195.4 320V311.5C1195.4 310 1196.4 309.3 1198 309.3H1226.7C1228.3 309.3 1229.3 310 1229.3 311.5V320Z" fill="#9aaec6"/>
<rect x="1195.4" y="320" width="52.5" height="6.9" fill="#7a9370"/>
<rect x="1195.4" y="326.9" width="52.5" height="6.7" fill="#363f4b"/>
<rect x="1247.9" y="273.6" width="14.2" height="60" fill="#fff"/>
<rect x="1262.1" y="262.9" width="9.3" height="70.7" fill="#f5c9a3"/>
<rect x="1271.4" y="246.9" width="11.5" height="86.7" fill="#c46e4f"/>
<!-- binders -->
<rect x="1202.4" y="380.2" width="26.4" height="78.4" fill="#a7b8a8"/>
<rect x="1228.8" y="380.2" width="26" height="78.4" fill="#7a9370"/>
<rect x="1254.8" y="380.2" width="26.7" height="78.4" fill="#134a55"/>
<g fill="#6e6357" stroke="#fff" stroke-width="1.6"><circle cx="1215" cy="436" r="4.3"/><circle cx="1241.5" cy="436" r="4.3"/><circle cx="1268" cy="436" r="4.3"/></g>
<!-- drawers -->
<rect x="1183" y="474.5" width="86" height="105" fill="#a8988a"/>
<rect x="1186" y="477.5" width="80" height="47" fill="#f3cca6"/>
<rect x="1186" y="527.5" width="29" height="49" fill="#f3cca6"/>
<rect x="1218.5" y="527.5" width="47.5" height="49" fill="#f3cca6"/>
<path d="M1212 477.5V480A4.7 4.7 0 0 0 1221.4 480V477.5Z" fill="#a8988a"/>
<path d="M1237.3 527.5V530A4.7 4.7 0 0 0 1246.7 530V527.5Z" fill="#a8988a"/>
</g>


<g>
<!-- chair back -->
<path d="M1206 499C1212 497 1217 500 1216 506L1192 630L1182.6 693L1143 654C1145 620 1150 590 1162 555C1172 530 1185 510 1195 503Z" fill="#dce6ea"/>
<!-- neck/ear skin -->
<path d="M1129.7 374.3C1133 371 1138 370 1141.6 371.8C1144 374 1145 377 1145.8 381.1L1150 393L1163.6 396.4L1168 425L1126 436L1134.8 413.3L1136.5 408.2L1129.7 381Z" fill="#5e372b"/>
<!-- shirt -->
<path d="M1116 441L1128.4 427.3L1165.6 417.7C1175 430 1185 450 1188 473C1190 490 1187 510 1184 522C1175 560 1160 590 1148 619L1100 650L1060 600L1076.8 530.8C1085 500 1100 460 1116 441Z" fill="#134a55"/>
<path d="M1086 470L1106 457L1082 518Z" fill="#0f2428"/>
<!-- face -->
<path d="M1095 362.5L1109.4 360.8L1110.3 365.9L1118.7 366.7C1122 368 1124 371 1124.7 374.3L1131 378L1133 400L1116.2 404H1101L1096.7 396.4C1096 393 1097 390 1098.4 388L1095.9 377.7Z" fill="#5e372b"/>
<!-- beard -->
<path d="M1101 400.6H1116.2L1124.7 396.4L1129.7 381L1134.8 394.7L1136.5 408.2C1137 411 1136 413 1134.8 413.3L1112.8 419.2C1110 419.5 1108 418 1107.7 415.8Z" fill="#10201f"/>
<!-- hair -->
<path d="M1092.5 355.7C1093 350 1095 346 1097.6 343.9C1099 341 1102 340 1104.3 339.6C1106 336 1109 335 1111 334.6C1117 331 1124 330 1129.7 330.7C1136 330 1141 331 1145 332.9C1151 334 1155 337 1158.5 339.6C1163 343 1165 346 1167 349C1170 355 1172 362 1172 369.3C1172.5 374 1172 379 1170.4 382.8C1169 389 1167 393 1163.6 396.4C1158 397 1153 396 1150 393C1148 389 1147 385 1145.8 381C1144 375 1140 371 1136 371.5C1131 373 1129 376 1129.7 381L1124.7 374.3C1122 370 1120 367 1118.7 366.7L1110.3 365.9L1109.4 360.8L1095 362.5C1093 360 1092.3 358 1092.5 355.7Z" fill="#10201f"/>
<path d="M1100.5 376.5L1104.3 392.5M1102.3 384.6L1125.7 378.3" stroke="#fff" stroke-width="1.5"/>
<!-- raised arm -->
<path d="M1072.2 421.8C1072 419 1073 418 1075 418C1077 415 1079 414.5 1081 415C1083 412 1086 411.5 1088 412.4C1090 411 1093 411 1094.6 412.4C1097 413 1099 416 1099.3 418.4C1102 418.5 1104 420 1103.5 421.8L1097.6 438.7L1090.8 450.5L1088.6 474L1077.5 530L1050 525C1056 500 1062 480 1070.5 455C1070 448 1070 440 1070.5 438.7Z" fill="#552e24"/>
<!-- laptop -->
<path d="M869 442C869 438 876 436 880 440L914 535H1003C1008 535 1011 540 1008 544H903Z" fill="#0c1f33"/>
<!-- typing arm -->
<path d="M989.5 511C995 507 1010 503 1019.8 503C1025 504 1030 508 1039 515L1109.8 544.5C1120 552 1132 562 1138.6 569.3C1130 580 1120 584 1112.5 583L1030 533.5C1020 530 1010 525 1003 520C996 518 990 516 989.5 511Z" fill="#5e372b"/>
<!-- pants front leg + thigh -->
<path d="M930 556C932 549 938 545 948 544.5L980 544.7L1030 552.8L1068 560.8L1112.5 583C1130 595 1145 615 1144 630C1135 642 1115 645 1098.8 643.5L1000 640L943 600L924.8 682.4L898.6 671.4L927 565C928 560 929 558 930 556Z" fill="#676a50"/>
<!-- dark leg -->
<path d="M955.7 589.3C960 587 965 588 970 591L1050 645V690H986L981 735.7H934.8L943.9 600C945 594 950 590 955.7 589.3Z" fill="#43443a"/>
<!-- seat -->
<path d="M986 646C986 641 989 639 994 639L1030 638C1080 640 1120 648 1142.8 654.5L1182.6 693H994C989 693 986 690 986 686Z" fill="#bfd3d8"/>
<!-- armrest pad -->
<path d="M1032 584L1113 598C1116 599 1117 602 1116 605L1114 610C1113 612 1110 613 1108 612L1031 598C1028 597 1027 595 1027 592L1028 587C1028.5 585 1030 584 1032 584Z" fill="#dce6ea"/>
<!-- chair frame -->
<g fill="none" stroke="#134a55" stroke-width="3.6" stroke-linejoin="round" stroke-linecap="round">
<path d="M1000 790L1015 622C1016 610 1022 603 1032 602.5C1060 602 1100 612 1146 621.6L1193.7 629.6"/>
<path d="M1011 695.5H1182.4"/>
<path d="M1182.4 695.5L1226 776C1229 782 1236 782 1235.5 775L1210 581C1209 577 1206 577 1205.5 581Z"/>
</g>
<!-- shoes -->
<path d="M900.6 672.4L924.8 682.4L916.7 708.6L905 702C902 697 898 690 892.6 688.5Z" fill="#5e372b"/>
<path d="M832.3 709.6C834 704 838 701.5 845 701L884 697C888 690 893 688 897 690C900 695 902 700 905 702L916.7 706L914 733C912 738 908 740 903 738.7L838 718C834 716 832 713 832.3 709.6Z" fill="#f3cda8"/>
<path d="M832.5 710L914.5 732L913 736C911 739 907 740 903 738.7L838 718C834 716 832 713 832.5 710Z" fill="#d9a08c"/>
<g fill="none" stroke="#d9a08c" stroke-width="2"><ellipse cx="871" cy="691" rx="6" ry="4" transform="rotate(20 871 691)"/><ellipse cx="879" cy="699" rx="3.5" ry="6" transform="rotate(20 879 699)"/></g>
<path d="M947 736.7H976V759L953 750Z" fill="#5e372b"/>
<path d="M894.6 782C896 776 905 772 915 770L940 758C943 751 948 748 953 750L976 759L980 782Z" fill="#f3cda8"/>
<rect x="894" y="780" width="86" height="3" fill="#d9a08c"/>
<g fill="none" stroke="#d9a08c" stroke-width="2"><ellipse cx="927" cy="756" rx="6" ry="4" transform="rotate(15 927 756)"/><ellipse cx="942" cy="762" rx="4" ry="6.5" transform="rotate(-20 942 762)"/></g>
</g>

</svg>
<div class="a" style="left:116px;top:462.5px;width:440px;height:62px;background:#fff;border:1px solid #666;border-radius:5px"></div>
<div class="a" style="left:116px;top:462.5px;width:440px;height:62px;background:rgba(147,196,125,0.55);border-radius:5px"></div>
<div class="a" style="left:126.5px;top:462.5px;width:429.5px;height:62px;background:#9fc4e7;border-radius:0 5px 5px 0"></div>
<div class="a" style="left:116px;top:524.5px;width:440px;height:11px;background:#f6caa0;"></div>
<div class="a" style="left:128.0px;top:485.9px;font:normal 16.9px/1 'Liberation Sans';color:#7f9cbb;white-space:pre;letter-spacing:0.07px">Search job titles or companies</div>
<svg class="a" style="left:120px;top:456px" width="445" height="75"><rect x="7.3" y="7" width="428" height="61" fill="none" stroke="#9a3ee8" stroke-width="1.8" stroke-dasharray="4 3"/><path d="M401.5 7V68" stroke="#9a3ee8" stroke-width="1.3" stroke-dasharray="2 2"/></svg>
<div class="a" style="left:116px;top:535.7px;width:439.5px;height:60px;background:#fff;border:1.2px solid #666;border-radius:5px"></div>
<div class="a" style="left:128.2px;top:557.0px;font:normal 17.6px/1 'Liberation Sans';color:#666;white-space:pre;letter-spacing:-0.2px">Location</div>
<div class="a" style="left:116px;top:608.4px;width:168.2px;height:61px;background:#0a66c2;border-radius:31px"></div>
<div class="a" style="left:143.6px;top:629.8px;font:bold 20.2px/1 'Liberation Sans';color:#fff;white-space:pre;letter-spacing:-0.5px">Search Jobs</div>
<div class="a" style="left:116px;top:353px;width:366px;height:98.5px;background:#fff;border-radius:3px;box-shadow:0 1px 6px rgba(0,0,0,0.28)"></div>
<svg class="a" style="left:128px;top:450px" width="22" height="14"><path d="M2 1L10 12L18 1Z" fill="#fff" style="filter:drop-shadow(0 1px 1px rgba(0,0,0,0.2))"/></svg>
<div class="a" style="left:116px;top:451.5px;width:71px;height:2px;background:#0d5f2e;"></div>
<svg class="a" style="left:127px;top:396px" width="20" height="14"><g fill="none" stroke="#1a73e8" stroke-width="1.4"><rect x="0.7" y="0.7" width="11" height="5" rx="1"/><rect x="13.5" y="0.7" width="5" height="5" rx="1"/><rect x="0.7" y="7.8" width="5" height="5" rx="1"/><rect x="7.5" y="7.8" width="11" height="5" rx="1"/></g></svg>
<div class="a" style="left:159.3px;top:363.9px;font:bold 15.4px/1 'Liberation Sans';color:#1a1aa6;white-space:pre;letter-spacing:0.05px"><span style="color:#881280">section</span>.dismissable-input.t</div>
<div class="a" style="left:159.3px;top:385.2px;font:bold 15.4px/1 'Liberation Sans';color:#1a1aa6;white-space:pre;letter-spacing:0.05px">ypeahead-input.keywords-</div>
<div class="a" style="left:159.3px;top:406.4px;font:bold 15.4px/1 'Liberation Sans';color:#1a1aa6;white-space:pre;letter-spacing:0.05px">typeahead-input.text-inpu</div>
<div class="a" style="left:159.3px;top:427.4px;font:bold 15.4px/1 'Liberation Sans';color:#1a1aa6;white-space:pre;">t</div>
<div class="a" style="left:371.7px;top:395.9px;font:normal 14.8px/1 'Liberation Sans';color:#707070;white-space:pre;letter-spacing:-0.1px">407.99 × 55.99</div>
</body></html>
